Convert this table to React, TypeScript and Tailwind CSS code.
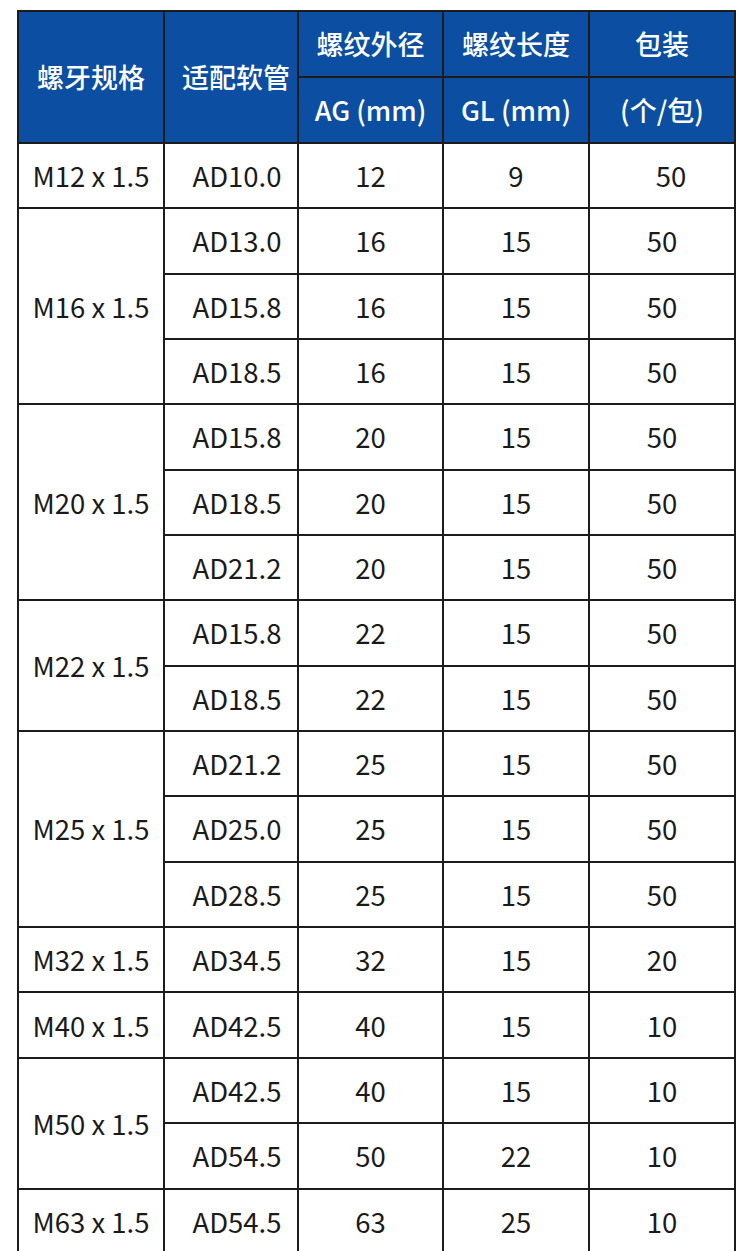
import React from 'react';

type Row = { spec?: string; span?: number; hose: string; ag: string; gl: string; pack: string };

const rows: Row[] = [
  { spec: 'M12 x 1.5', span: 1, hose: 'AD10.0', ag: '12', gl: '9', pack: '50' },
  { spec: 'M16 x 1.5', span: 3, hose: 'AD13.0', ag: '16', gl: '15', pack: '50' },
  { hose: 'AD15.8', ag: '16', gl: '15', pack: '50' },
  { hose: 'AD18.5', ag: '16', gl: '15', pack: '50' },
  { spec: 'M20 x 1.5', span: 3, hose: 'AD15.8', ag: '20', gl: '15', pack: '50' },
  { hose: 'AD18.5', ag: '20', gl: '15', pack: '50' },
  { hose: 'AD21.2', ag: '20', gl: '15', pack: '50' },
  { spec: 'M22 x 1.5', span: 2, hose: 'AD15.8', ag: '22', gl: '15', pack: '50' },
  { hose: 'AD18.5', ag: '22', gl: '15', pack: '50' },
  { spec: 'M25 x 1.5', span: 3, hose: 'AD21.2', ag: '25', gl: '15', pack: '50' },
  { hose: 'AD25.0', ag: '25', gl: '15', pack: '50' },
  { hose: 'AD28.5', ag: '25', gl: '15', pack: '50' },
  { spec: 'M32 x 1.5', span: 1, hose: 'AD34.5', ag: '32', gl: '15', pack: '20' },
  { spec: 'M40 x 1.5', span: 1, hose: 'AD42.5', ag: '40', gl: '15', pack: '10' },
  { spec: 'M50 x 1.5', span: 2, hose: 'AD42.5', ag: '40', gl: '15', pack: '10' },
  { hose: 'AD54.5', ag: '50', gl: '22', pack: '10' },
  { spec: 'M63 x 1.5', span: 1, hose: 'AD54.5', ag: '63', gl: '25', pack: '10' },
];

const th = 'border-2 border-[#1c1c1c] text-center align-middle text-[27px] font-medium text-white whitespace-nowrap';
const td = 'border-2 border-[#1c1c1c] text-center align-middle whitespace-nowrap';

export default function App() {
  return (
    <div
      className="h-[1251px] overflow-hidden bg-white pl-[17px] pt-[10px] text-[27.5px] text-[#1a1a1a]"
      style={{ fontFamily: '"Noto Sans CJK SC", "Noto Sans", sans-serif' }}
    >
      <table className="w-[717px] table-fixed border-collapse">
        <colgroup>
          <col className="w-[146px]" />
          <col className="w-[134px]" />
          <col className="w-[145px]" />
          <col className="w-[146px]" />
          <col className="w-[146px]" />
        </colgroup>
        <thead className="bg-[#0b4ea2]">
          <tr className="h-[66px]">
            <th rowSpan={2} className={th}>螺牙规格</th>
            <th rowSpan={2} className={`${th} pl-[10px]`}>适配软管</th>
            <th className={th}>螺纹外径</th>
            <th className={th}>螺纹长度</th>
            <th className={th}>包装</th>
          </tr>
          <tr className="h-[66px]">
            <th className={th}>AG (mm)</th>
            <th className={th}>GL (mm)</th>
            <th className={th}>(个/包)</th>
          </tr>
        </thead>
        <tbody>
          {rows.map((r, i) => (
            <tr key={i} className="h-[65.35px]">
              {r.spec && (
                <td rowSpan={r.span} className={td}>
                  {r.spec}
                </td>
              )}
              <td className={`${td} pl-[12px]`}>{r.hose}</td>
              <td className={td}>{r.ag}</td>
              <td className={td}>{r.gl}</td>
              <td className={`${td} ${i === 0 ? 'pl-[18px]' : ''}`}>{r.pack}</td>
            </tr>
          ))}
        </tbody>
      </table>
    </div>
  );
}
